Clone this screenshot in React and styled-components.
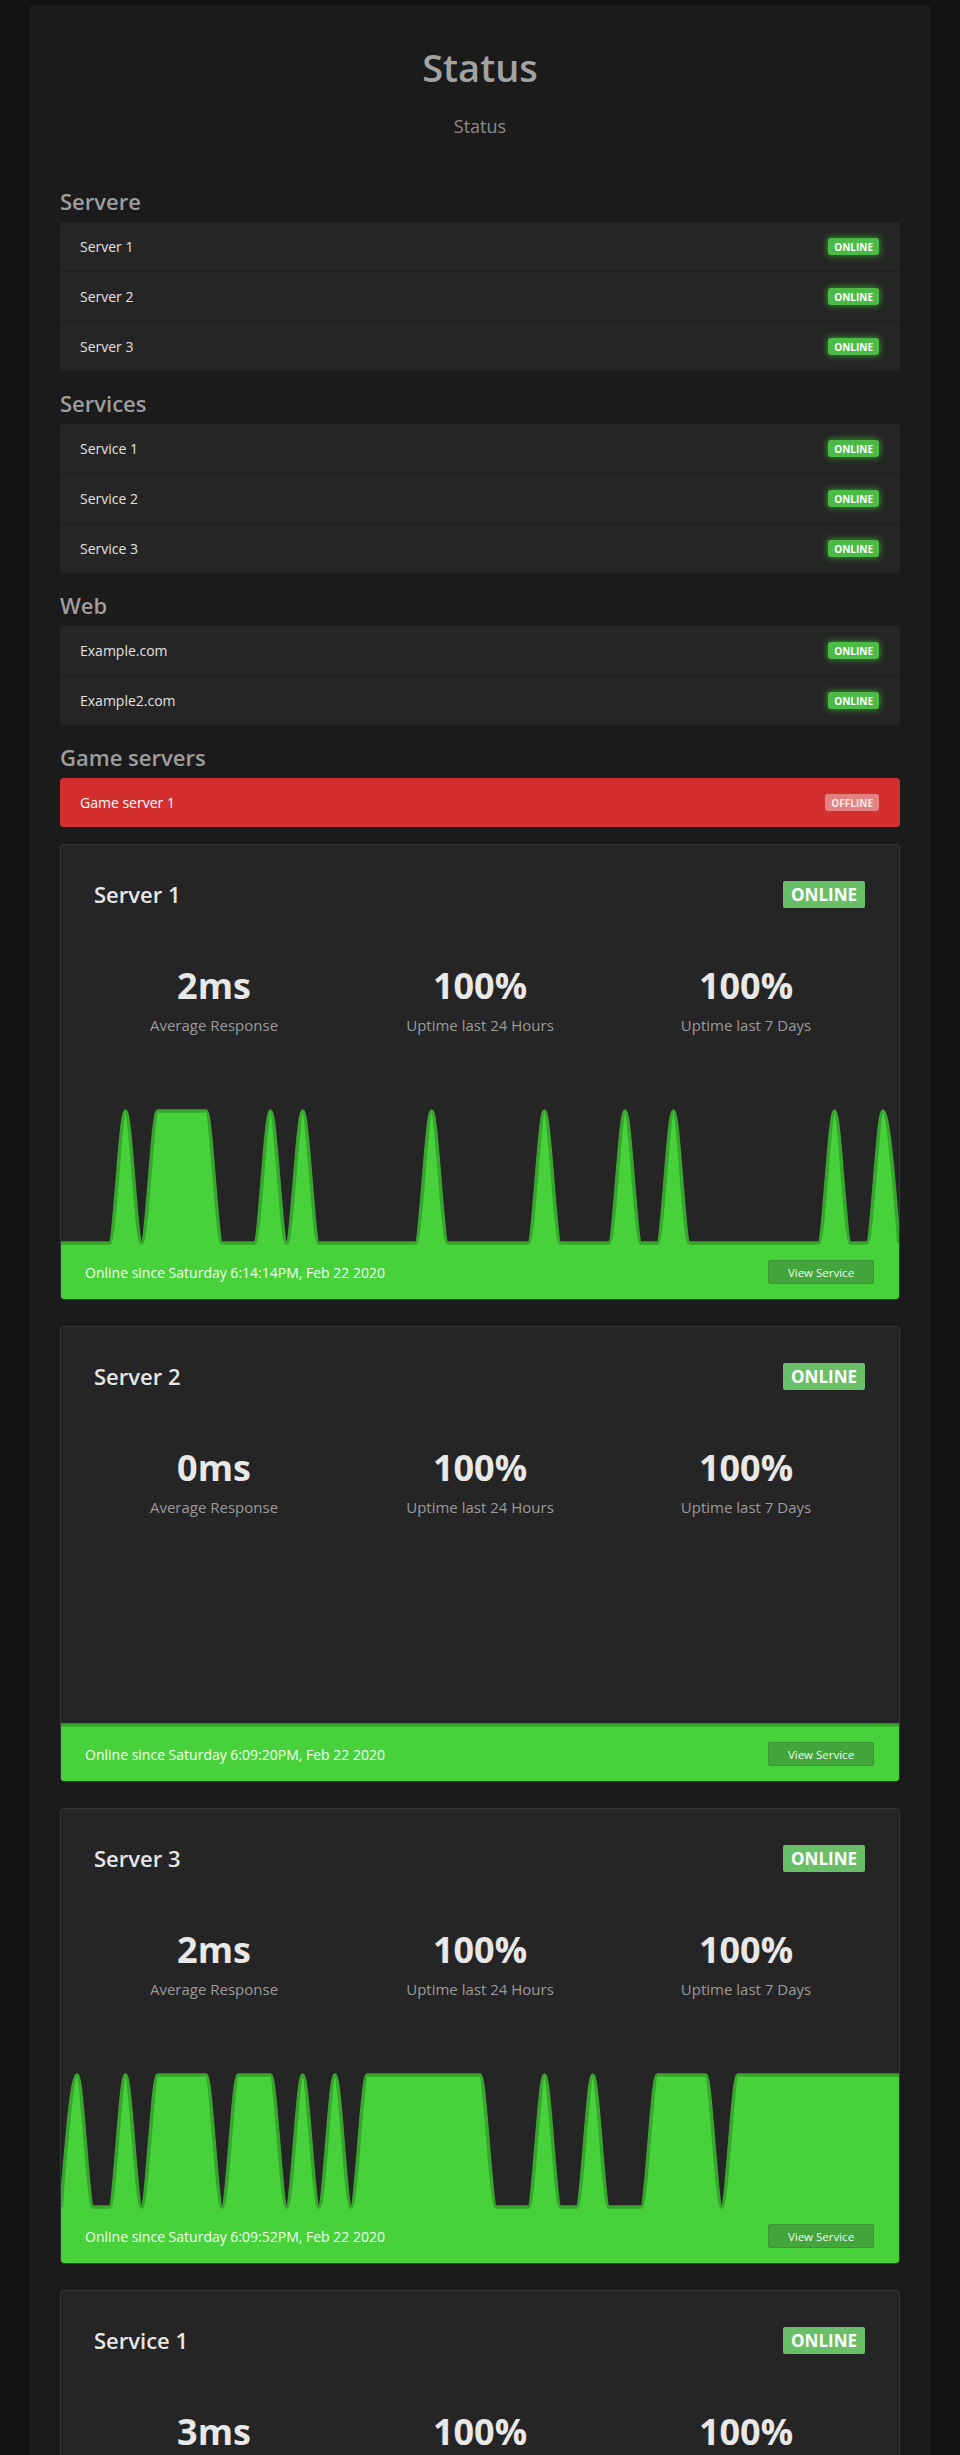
import React from "react";
import styled, { createGlobalStyle } from "styled-components";

const GlobalStyle = createGlobalStyle`
  html, body { margin: 0; padding: 0; background: #121212; }
  body { font-family: "Open Sans", "Noto Sans", "DejaVu Sans", sans-serif; -webkit-font-smoothing: antialiased; }
  * { box-sizing: border-box; }
`;

const Page = styled.div`
  padding-top: 6px;
`;

const Container = styled.main`
  width: 900px;
  margin: 0 auto;
  background: #1b1b1b;
  padding: 38.6px 30px 40px;
  display: flex;
  flex-direction: column;
`;

const Header = styled.header`
  text-align: center;
  margin-bottom: 29px;
`;

const Title = styled.h1`
  margin: 0;
  font-size: 38px;
  line-height: 45.6px;
  font-weight: 600;
  color: #a3a3a3;
`;

const Subtitle = styled.div`
  margin-top: 23.3px;
  font-size: 18px;
  line-height: 27px;
  font-weight: 500;
  color: #8a8a8a;
`;

const Section = styled.section`
  display: flex;
  flex-direction: column;
`;

const SectionHeading = styled.h2`
  margin: 17px 0 6px;
  font-size: 22px;
  line-height: 30px;
  font-weight: 600;
  color: #9d9d9d;
`;

const List = styled.div`
  display: flex;
  flex-direction: column;
  gap: 1px;
  background: #1e1e1e;
  border-radius: 4px;
  overflow: hidden;
`;

const Row = styled.div`
  height: 49px;
  display: flex;
  align-items: center;
  justify-content: space-between;
  padding: 0 21px 0 20px;
  background: ${(p) => (p.$offline ? "#d32f2f" : "#252525")};
  color: ${(p) => (p.$offline ? "#ffffff" : "#e2e2e2")};
  font-size: 14px;
  border-radius: ${(p) => (p.$offline ? "4px" : "0")};
`;

const SmallBadge = styled.span`
  display: inline-flex;
  align-items: center;
  height: 17px;
  padding: 0 6px;
  border-radius: 3px;
  font-size: 10px;
  font-weight: 700;
  color: ${(p) => (p.$offline ? "#fbe9e9" : "#ffffff")};
  background: ${(p) => (p.$offline ? "rgba(255,255,255,0.4)" : "#4cba46")};
  box-shadow: ${(p) => (p.$offline ? "none" : "0 0 6px 1px rgba(76, 215, 60, 0.55)")};
`;

const Cards = styled.div`
  margin-top: 17px;
  display: flex;
  flex-direction: column;
  gap: 26px;
`;

const Card = styled.article`
  border: 1px solid #363636;
  border-radius: 4px;
  background: #252525;
  overflow: hidden;
  padding-top: 36px;
`;

const CardHeader = styled.div`
  height: 27px;
  display: flex;
  align-items: center;
  justify-content: space-between;
  padding: 0 34px 0 33px;
`;

const CardTitle = styled.h3`
  margin: 0;
  font-size: 22px;
  line-height: 27px;
  font-weight: 600;
  color: #e6e6e6;
`;

const BigBadge = styled.span`
  display: inline-flex;
  align-items: center;
  height: 27px;
  padding: 0 8px;
  border-radius: 2px;
  font-size: 17px;
  font-weight: 700;
  color: #ffffff;
  background: ${(p) => (p.$offline ? "#e57373" : "#69bf68")};
`;

const Stats = styled.div`
  margin-top: 56px;
  display: grid;
  grid-template-columns: repeat(3, 1fr);
  padding: 0 20px;
  text-align: center;
`;

const StatValue = styled.div`
  font-size: 36px;
  line-height: 44px;
  font-weight: 700;
  color: #e8e8e8;
`;

const StatLabel = styled.div`
  margin-top: 6px;
  font-size: 15px;
  line-height: 22px;
  color: #9a9a9a;
`;

const Chart = styled.svg`
  display: block;
  margin-top: 73px;
  width: 100%;
  height: 136px;
`;

const Footer = styled.div`
  height: 54px;
  display: flex;
  align-items: center;
  justify-content: space-between;
  padding: 0 25px 0 24px;
  background: #47d13a;
  color: #f4fff2;
  font-size: 14px;
`;

const ViewButton = styled.button`
  height: 24px;
  width: 106px;
  border: 1px solid #3b9535;
  border-radius: 2px;
  background: #45a53d;
  color: #eef8ec;
  font-family: inherit;
  font-size: 11.5px;
  padding: 0;
`;

const W = 836;
const H = 136;
const TOP = 2;
const BOTTOM = 134;

function buildPath(values) {
  const n = values.length;
  const h = W / (n - 1);
  const xs = values.map((_, i) => i * h);
  const ys = values.map((v) => BOTTOM - v * (BOTTOM - TOP));
  const s = [];
  for (let i = 0; i < n - 1; i++) s.push((ys[i + 1] - ys[i]) / h);
  const m = new Array(n).fill(0);
  for (let i = 1; i < n - 1; i++) {
    const s0 = s[i - 1];
    const s1 = s[i];
    const p = (s0 + s1) / 2;
    m[i] =
      (Math.sign(s0) + Math.sign(s1)) *
        Math.min(Math.abs(s0), Math.abs(s1), 0.5 * Math.abs(p)) || 0;
  }
  m[0] = (3 * s[0] - m[1]) / 2;
  m[n - 1] = (3 * s[n - 2] - m[n - 2]) / 2;
  let d = `M${xs[0]},${ys[0]}`;
  for (let i = 0; i < n - 1; i++) {
    const dx = h / 3;
    d += ` C${xs[i] + dx},${ys[i] + dx * m[i]} ${xs[i + 1] - dx},${ys[i + 1] - dx * m[i + 1]} ${xs[i + 1]},${ys[i + 1]}`;
  }
  return d;
}

function fromOnes(ones, n = 53) {
  const arr = new Array(n).fill(0);
  ones.forEach((i) => {
    arr[i] = 1;
  });
  return arr;
}

function UptimeChart({ values }) {
  const line = buildPath(values);
  const area = `${line} L${W},${H} L0,${H} Z`;
  return (
    <Chart viewBox={`0 0 ${W} ${H}`} preserveAspectRatio="none">
      <path d={area} fill="#47d13a" />
      <path d={line} fill="none" stroke="#38a62e" strokeWidth="3.5" />
    </Chart>
  );
}

const sections = [
  { title: "Servere", items: ["Server 1", "Server 2", "Server 3"] },
  { title: "Services", items: ["Service 1", "Service 2", "Service 3"] },
  { title: "Web", items: ["Example.com", "Example2.com"] },
];

const cards = [
  {
    name: "Server 1",
    ms: "2ms",
    since: "Online since Saturday 6:14:14PM, Feb 22 2020",
    data: fromOnes([4, 6, 7, 8, 9, 13, 15, 23, 30, 35, 38, 48, 51]),
  },
  {
    name: "Server 2",
    ms: "0ms",
    since: "Online since Saturday 6:09:20PM, Feb 22 2020",
    data: fromOnes([]),
  },
  {
    name: "Server 3",
    ms: "2ms",
    since: "Online since Saturday 6:09:52PM, Feb 22 2020",
    data: fromOnes([
      1, 4, 6, 7, 8, 9, 11, 12, 13, 15, 17, 19, 20, 21, 22, 23, 24, 25, 26, 30,
      33, 37, 38, 39, 40, 42, 43, 44, 45, 46, 47, 48, 49, 50, 51, 52,
    ]),
  },
  {
    name: "Service 1",
    ms: "3ms",
    since: "Online since Saturday 6:09:18PM, Feb 22 2020",
    data: fromOnes([3, 9, 10, 17, 26, 31, 40, 46]),
  },
  {
    name: "Service 2",
    ms: "1ms",
    since: "Online since Saturday 6:09:18PM, Feb 22 2020",
    data: fromOnes([5, 12, 20, 33, 44]),
  },
];

export default function App() {
  return (
    <Page>
      <GlobalStyle />
      <Container>
        <Header>
          <Title>Status</Title>
          <Subtitle>Status</Subtitle>
        </Header>

        {sections.map((sec) => (
          <Section key={sec.title}>
            <SectionHeading>{sec.title}</SectionHeading>
            <List>
              {sec.items.map((item) => (
                <Row key={item}>
                  <span>{item}</span>
                  <SmallBadge>ONLINE</SmallBadge>
                </Row>
              ))}
            </List>
          </Section>
        ))}

        <Section>
          <SectionHeading>Game servers</SectionHeading>
          <Row $offline>
            <span>Game server 1</span>
            <SmallBadge $offline>OFFLINE</SmallBadge>
          </Row>
        </Section>

        <Cards>
          {cards.map((c) => (
            <Card key={c.name}>
              <CardHeader>
                <CardTitle>{c.name}</CardTitle>
                <BigBadge>ONLINE</BigBadge>
              </CardHeader>
              <Stats>
                <div>
                  <StatValue>{c.ms}</StatValue>
                  <StatLabel>Average Response</StatLabel>
                </div>
                <div>
                  <StatValue>100%</StatValue>
                  <StatLabel>Uptime last 24 Hours</StatLabel>
                </div>
                <div>
                  <StatValue>100%</StatValue>
                  <StatLabel>Uptime last 7 Days</StatLabel>
                </div>
              </Stats>
              <UptimeChart values={c.data} />
              <Footer>
                <span>{c.since}</span>
                <ViewButton>View Service</ViewButton>
              </Footer>
            </Card>
          ))}
        </Cards>
      </Container>
    </Page>
  );
}
